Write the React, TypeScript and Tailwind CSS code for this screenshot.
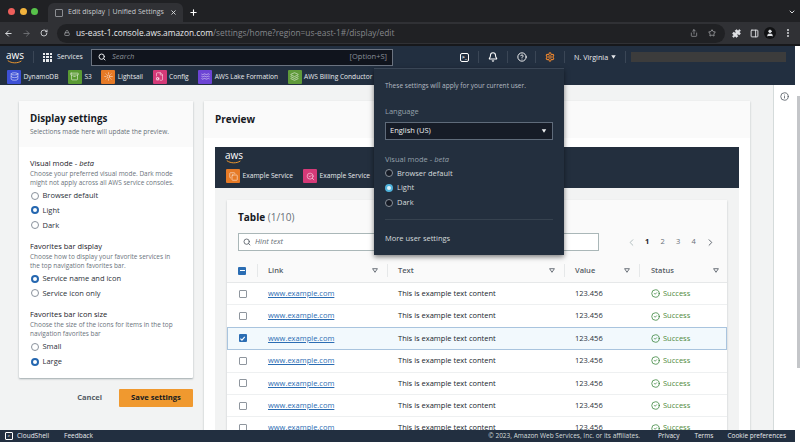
import {
  Archive,
  ArrowLeft,
  ArrowRight,
  Bell,
  ChevronDown,
  ChevronLeft,
  ChevronRight,
  CircleCheck,
  CircleHelp,
  Copy,
  Database,
  FileCog,
  Info,
  Layers,
  Lock,
  MoreVertical,
  PanelRight,
  Plus,
  Puzzle,
  RotateCw,
  Search,
  SearchCheck,
  Settings,
  Share,
  Star,
  Sun,
  User,
  Waves,
  X,
} from "lucide-react";

const favorites = [
  { name: "DynamoDB", color: "bg-[#3d50d6]", icon: Database },
  { name: "S3", color: "bg-[#5a9a33]", icon: Archive },
  { name: "Lightsail", color: "bg-[#e67a26]", icon: Sun },
  { name: "Config", color: "bg-[#d53a78]", icon: FileCog },
  { name: "AWS Lake Formation", color: "bg-[#6c44d4]", icon: Waves },
  { name: "AWS Billing Conductor", color: "bg-[#5f9a3a]", icon: Layers },
];

function Caret({ className }: { className: string }) {
  return (
    <svg viewBox="0 0 10 8" className={className}>
      <path d="M0.5 0.5h9L5 7.5z" fill="currentColor" />
    </svg>
  );
}

function SortIcon() {
  return (
    <svg viewBox="0 0 10 8" className="h-[5px] w-[6px] text-[#545b64]">
      <path d="M1 1h8L5 7z" fill="none" stroke="currentColor" strokeWidth="1.4" />
    </svg>
  );
}

function AwsLogo() {
  return (
    <div className="flex w-[18px] flex-col items-center">
      <span className="text-[10px] leading-[9px] font-medium text-white">aws</span>
      <svg viewBox="0 0 20 5" className="h-[4px] w-[18px]">
        <path d="M1 0.8C6 4.4 13 4.4 18 1.2" fill="none" stroke="#f29a2e" strokeWidth="1.2" />
      </svg>
    </div>
  );
}

function Radio({ checked, dark }: { checked?: boolean; dark?: boolean }) {
  if (checked) {
    return (
      <span
        className={
          dark
            ? "h-[8px] w-[8px] shrink-0 rounded-full border-[2.5px] border-[#4fb3dc] bg-[#dff3fb]"
            : "h-[8px] w-[8px] shrink-0 rounded-full border-[2.5px] border-[#2567b0] bg-white"
        }
      />
    );
  }
  return (
    <span
      className={
        dark
          ? "h-[8px] w-[8px] shrink-0 rounded-full border border-[#8a929c] bg-[#151a24]"
          : "h-[8px] w-[8px] shrink-0 rounded-full border border-[#8a929c] bg-white"
      }
    />
  );
}

function RadioRow({ label, checked }: { label: string; checked?: boolean }) {
  return (
    <div className="flex h-[14.7px] items-center gap-[4px] pl-[0.5px] text-[7.5px] font-medium text-[#2a3038]">
      <Radio checked={checked} />
      <span>{label}</span>
    </div>
  );
}

function SettingsGroup(props: {
  title: React.ReactNode;
  help: string[];
  children: React.ReactNode;
}) {
  return (
    <div className="flex flex-col">
      <div className="text-[7.5px] leading-[10px] font-medium text-[#1b2128]">{props.title}</div>
      <div className="mt-[1px] mb-[1px] text-[6.45px] leading-[9.2px] text-[#6b737c]">
        {props.help.map((line) => (
          <div key={line} className="whitespace-nowrap">
            {line}
          </div>
        ))}
      </div>
      {props.children}
    </div>
  );
}

function Row({ selected, checked }: { selected?: boolean; checked?: boolean }) {
  return (
    <div
      className={
        selected
          ? "-mt-px grid h-[23.4px] shrink-0 grid-cols-[40px_130px_177px_76px_1fr] items-center border border-[#a9c4de] bg-[#f2f9fd] text-[7.5px]"
          : "grid h-[22.4px] shrink-0 grid-cols-[40px_130px_177px_76px_1fr] items-center border-b border-[#eef0f1] px-px text-[7.5px]"
      }
    >
      <div className="pl-[10.5px]">
        {checked ? (
          <span className="flex h-[8px] w-[8px] items-center justify-center rounded-[1px] bg-[#2b6db3]">
            <svg viewBox="0 0 10 10" className="h-[7px] w-[7px]">
              <path d="M2 5.2 4.2 7.4 8.2 2.6" fill="none" stroke="white" strokeWidth="1.6" />
            </svg>
          </span>
        ) : (
          <span className="block h-[8px] w-[8px] rounded-[1px] border border-[#8f969e] bg-white" />
        )}
      </div>
      <div className="text-[#2b6db3] underline">www.example.com</div>
      <div className="font-medium text-[#20262d]">This is example text content</div>
      <div className="font-medium text-[#2a3038]">123.456</div>
      <div className="flex items-center gap-[3px] font-medium text-[#4f8a3c]">
        <CircleCheck className="h-[9px] w-[9px] text-[#2f7d32]" strokeWidth={2} />
        Success
      </div>
    </div>
  );
}

function HeadCell({ label, width }: { label: string; width: string }) {
  return (
    <div className={`flex h-[13px] items-center justify-between border-l border-[#e6e8e9] pr-[9px] pl-[10px] ${width}`}>
      <span className="text-[7.5px] font-semibold text-[#545b64]">{label}</span>
      <SortIcon />
    </div>
  );
}

export default function App() {
  return (
    <div
      className="flex h-[442px] w-[800px] flex-col overflow-hidden bg-white"
      style={{ fontFamily: '"Open Sans", "Noto Sans", sans-serif' }}
    >
      {/* browser tabs */}
      <div className="flex h-[22px] shrink-0 items-end bg-[#202124]">
        <div className="mb-[7px] ml-[8px] flex w-[31px] gap-[4.5px]">
          <span className="h-[7px] w-[7px] rounded-full bg-[#ee5f5b]" />
          <span className="h-[7px] w-[7px] rounded-full bg-[#f2b33d]" />
          <span className="h-[7px] w-[7px] rounded-full bg-[#57c24a]" />
        </div>
        <div className="ml-[9px] flex h-[19px] w-[135px] items-center rounded-t-[6px] bg-[#303135] pr-[6px] pl-[7px]">
          <span className="h-[8px] w-[8px] rounded-[1px] border border-[#8c8e92]" />
          <span className="ml-[5px] text-[7px] whitespace-nowrap text-[#c8cacd]">
            Edit display | Unified Settings
          </span>
          <X className="ml-auto h-[7px] w-[7px] text-[#dfe1e4]" strokeWidth={3} />
        </div>
        <Plus className="mb-[5px] ml-[6px] h-[9px] w-[9px] text-white" strokeWidth={3} />
        <ChevronDown className="mb-[6px] ml-auto mr-[4px] h-[8px] w-[8px] text-[#d8dadd]" strokeWidth={3} />
      </div>
      {/* browser toolbar */}
      <div className="flex h-[24px] shrink-0 items-center border-b-2 border-[#17181b] bg-[#303135]">
        <ArrowLeft className="ml-[4px] h-[9px] w-[9px] text-[#dfe1e4]" strokeWidth={2.5} />
        <ArrowRight className="ml-[9px] h-[9px] w-[9px] text-[#6f7175]" strokeWidth={2.5} />
        <RotateCw className="ml-[9px] h-[8px] w-[8px] text-[#dfe1e4]" strokeWidth={2.5} />
        <div className="ml-[9px] flex h-[19px] w-[668px] items-center rounded-full bg-[#202124] pr-[5px] pl-[7px]">
          <Lock className="h-[6px] w-[6px] text-[#9a9ca0]" strokeWidth={3} />
          <span className="ml-[6px] text-[8.35px] whitespace-nowrap">
            <span className="font-medium text-[#e8eaed]">us-east-1.console.aws.amazon.com</span>
            <span className="text-[#85878b]">/settings/home?region=us-east-1#/display/edit</span>
          </span>
          <Share className="ml-auto h-[8px] w-[8px] text-[#a9abaf]" />
          <Star className="mr-[4px] ml-[10px] h-[8px] w-[8px] text-[#c4c6c9]" />
        </div>
        <Puzzle className="ml-[7px] h-[9px] w-[9px] fill-[#e0e2e5] text-[#e0e2e5]" />
        <PanelRight className="ml-[9px] h-[9px] w-[9px] text-[#e0e2e5]" strokeWidth={2.5} />
        <div className="ml-[5px] flex h-[12px] w-[12px] items-center justify-center rounded-full bg-[#111214]">
          <User className="h-[8px] w-[8px] fill-[#e0e2e5] text-[#e0e2e5]" />
        </div>
        <MoreVertical className="ml-[7px] h-[10px] w-[10px] text-[#d5d7da]" strokeWidth={3} />
      </div>

      <div className="flex min-h-0 flex-1">
        <div className="relative flex w-[795px] shrink-0 flex-col">
          {/* console nav */}
          <div className="flex h-[22px] shrink-0 items-center bg-[#222f40]">
            <div className="ml-[6px]">
              <AwsLogo />
            </div>
            <span className="ml-[9px] h-[12px] w-px bg-[#3a4656]" />
            <div className="ml-[9px] grid h-[9px] w-[9px] grid-cols-3 gap-[1px]">
              {Array.from({ length: 9 }).map((_, i) => (
                <span key={i} className="bg-[#e8eaed]" />
              ))}
            </div>
            <span className="ml-[5px] w-[34px] text-[6.8px] font-medium text-[#e8eaed]">Services</span>
            <div className="flex h-[17px] w-[302px] items-center border border-[#6b7380] bg-[#10141d] pr-[5px] pl-[6px]">
              <Search className="h-[8px] w-[8px] text-[#e8eaed]" strokeWidth={3} />
              <span className="ml-[6px] text-[7.5px] text-[#8a9099] italic">Search</span>
              <span className="ml-auto text-[7.5px] text-[#8a9099]">[Option+S]</span>
            </div>
            <div className="ml-[67px] flex h-[9px] w-[9px] items-center justify-center rounded-[2px] border border-white text-[5px] leading-none font-bold text-white">
              &gt;_
            </div>
            <span className="ml-[9px] h-[12px] w-px bg-[#3a4656]" />
            <Bell className="ml-[9px] h-[10px] w-[10px] text-white" strokeWidth={2.5} />
            <span className="ml-[9px] h-[12px] w-px bg-[#3a4656]" />
            <CircleHelp className="ml-[9px] h-[10px] w-[10px] text-white" strokeWidth={2.2} />
            <span className="ml-[8px] h-[12px] w-px bg-[#3a4656]" />
            <Settings className="ml-[9px] h-[10px] w-[10px] text-[#e8842e]" strokeWidth={2.5} />
            <span className="ml-[9px] h-[12px] w-px bg-[#3a4656]" />
            <span className="ml-[9px] text-[7.2px] font-medium whitespace-nowrap text-[#e8eaed]">N. Virginia</span>
            <Caret className="ml-[3px] h-[4px] w-[5px] text-[#e8eaed]" />
            <span className="ml-[9px] h-[12px] w-px bg-[#3a4656]" />
            <span className="ml-[5px] h-[10px] w-[155px] bg-[#3c3c3c]" />
          </div>
          {/* favorites */}
          <div className="flex h-[17px] shrink-0 items-center gap-[9.5px] bg-[#222f40] pl-[7px]">
            {favorites.map((f) => (
              <div key={f.name} className="flex shrink-0 items-center gap-[2.5px]">
                <span className={`flex h-[14px] w-[14px] shrink-0 items-center justify-center rounded-[1px] ${f.color}`}>
                  <f.icon className="h-[9px] w-[9px] text-white/85" strokeWidth={1.6} />
                </span>
                <span className="text-[6.6px] font-medium whitespace-nowrap text-[#e8eaed]">{f.name}</span>
              </div>
            ))}
          </div>

          {/* page */}
          <div className="flex min-h-0 flex-1 overflow-hidden bg-[#f2f3f3]">
            <div className="flex min-w-0 flex-1 items-start gap-[11px] pt-[16px] pl-[19px]">
              {/* settings column */}
              <div className="flex w-[174px] shrink-0 flex-col">
                <div className="h-[277px] rounded-[1px] bg-white shadow-[0_1px_2px_rgba(0,28,36,0.35)]">
                  <div className="h-[46px] bg-[#fafafa] px-[11px] pt-[11px]">
                    <div className="text-[9.8px] leading-[13px] font-bold text-[#16191f]">Display settings</div>
                    <div className="mt-[2px] text-[6.5px] leading-[9px] text-[#687078]">
                      Selections made here will update the preview.
                    </div>
                  </div>
                  <div className="flex flex-col gap-[8.5px] px-[11px] pt-[11px]">
                    <SettingsGroup
                      title={
                        <>
                          Visual mode - <i>beta</i>
                        </>
                      }
                      help={[
                        "Choose your preferred visual mode. Dark mode",
                        "might not apply across all AWS service consoles.",
                      ]}
                    >
                      <RadioRow label="Browser default" />
                      <RadioRow label="Light" checked />
                      <RadioRow label="Dark" />
                    </SettingsGroup>
                    <SettingsGroup
                      title="Favorites bar display"
                      help={[
                        "Choose how to display your favorite services in",
                        "the top navigation favorites bar.",
                      ]}
                    >
                      <RadioRow label="Service name and icon" checked />
                      <RadioRow label="Service icon only" />
                    </SettingsGroup>
                    <SettingsGroup
                      title="Favorites bar icon size"
                      help={[
                        "Choose the size of the icons for items in the top",
                        "navigation favorites bar",
                      ]}
                    >
                      <RadioRow label="Small" />
                      <RadioRow label="Large" checked />
                    </SettingsGroup>
                  </div>
                </div>
                <div className="mt-[11px] flex items-center justify-end gap-[17px]">
                  <span className="text-[7.5px] font-bold text-[#545b64]">Cancel</span>
                  <div className="flex h-[18px] w-[74px] items-center justify-center rounded-[1px] bg-[#f0992f] text-[7.6px] font-bold text-[#16191f]">
                    Save settings
                  </div>
                </div>
              </div>

              {/* preview */}
              <div className="flex h-[400px] w-[546px] shrink-0 flex-col bg-white shadow-[0_1px_2px_rgba(0,28,36,0.25)]">
                <div className="flex h-[37px] shrink-0 items-center bg-[#fafafa] pl-[11px] text-[10px] font-bold text-[#16191f]">
                  Preview
                </div>
                <div className="mt-[9px] ml-[11px] flex w-[524px] flex-1 flex-col bg-[#f2f3f3]">
                  <div className="h-[41px] shrink-0 bg-[#232f3e] pt-[4px] pl-[10px]">
                    <AwsLogo />
                    <div className="mt-[5px] flex gap-[10px] pl-[1px]">
                      <div className="flex items-center gap-[2.5px]">
                        <span className="flex h-[14px] w-[14px] items-center justify-center rounded-[1px] bg-[#e67a26]">
                          <Copy className="h-[9px] w-[9px] text-white/85" strokeWidth={1.6} />
                        </span>
                        <span className="text-[6.7px] font-medium whitespace-nowrap text-[#e8eaed]">Example Service</span>
                      </div>
                      <div className="flex items-center gap-[2.5px]">
                        <span className="flex h-[14px] w-[14px] items-center justify-center rounded-[1px] bg-[#d53a78]">
                          <SearchCheck className="h-[9px] w-[9px] text-white/85" strokeWidth={1.6} />
                        </span>
                        <span className="text-[6.7px] font-medium whitespace-nowrap text-[#e8eaed]">Example Service</span>
                      </div>
                    </div>
                  </div>
                  {/* table card */}
                  <div className="mt-[12px] ml-[12px] flex min-h-0 w-[500px] flex-1 flex-col bg-white shadow-[0_1px_2px_rgba(0,28,36,0.2)]">
                    <div className="h-[60px] shrink-0 bg-[#fafafa] px-[11px] pt-[10px]">
                      <div className="text-[10px] leading-[14px] font-bold text-[#16191f]">
                        Table <span className="font-normal text-[#687078]">(1/10)</span>
                      </div>
                      <div className="mt-[9px] flex items-center">
                        <div className="flex h-[18px] w-[364px] items-center border border-[#aab7b8] bg-white pl-[4px]">
                          <Search className="h-[8px] w-[8px] text-[#545b64]" strokeWidth={2.5} />
                          <span className="ml-[4px] text-[7.5px] text-[#687078] italic">Hint text</span>
                        </div>
                        <ChevronLeft className="ml-[27px] h-[11px] w-[11px] text-[#aab7b8]" strokeWidth={2} />
                        <div className="ml-[8px] flex gap-[10px] text-[7.5px] font-medium text-[#687078]">
                          <span className="w-[5.5px] font-bold text-[#16191f]">1</span>
                          <span className="w-[5.5px]">2</span>
                          <span className="w-[5.5px]">3</span>
                          <span className="w-[5.5px]">4</span>
                        </div>
                        <ChevronRight className="ml-[8px] h-[11px] w-[11px] text-[#545b64]" strokeWidth={2} />
                      </div>
                    </div>
                    <div className="flex h-[23px] shrink-0 items-center border-b border-[#e6e8e9] bg-[#fafafa] pb-[1px] text-[7.5px]">
                      <div className="flex w-[30px] justify-center">
                        <span className="flex h-[8px] w-[8px] items-center justify-center rounded-[1px] bg-[#2b6db3]">
                          <span className="h-px w-[5px] bg-white" />
                        </span>
                      </div>
                      <HeadCell label="Link" width="w-[130px]" />
                      <HeadCell label="Text" width="w-[177px]" />
                      <HeadCell label="Value" width="w-[75px]" />
                      <div className="flex h-[13px] flex-1 items-center justify-between border-l border-[#e6e8e9] pr-[8px] pl-[11px]">
                        <span className="text-[7.5px] font-semibold text-[#545b64]">Status</span>
                        <SortIcon />
                      </div>
                    </div>
                    <div className="flex min-h-0 flex-1 flex-col overflow-hidden">
                      <Row />
                      <Row />
                      <Row selected checked />
                      <Row />
                      <Row />
                      <Row />
                      <Row />
                    </div>
                  </div>
                </div>
              </div>
            </div>
            {/* tools rail */}
            <div className="flex w-[22px] shrink-0 justify-center border-l border-[#d5dbdb] bg-white pt-[7px]">
              <Info className="h-[9px] w-[9px] text-[#545b64]" strokeWidth={2.2} />
            </div>
          </div>

          {/* footer */}
          <div className="flex h-[12px] shrink-0 items-center bg-[#222f40] text-[6.5px] font-medium text-[#e8eaed]">
            <span className="ml-[5px] flex h-[8px] w-[8px] items-center justify-center rounded-[1px] border border-white text-[4px] leading-none font-bold">
              &gt;
            </span>
            <span className="ml-[4px]">CloudShell</span>
            <span className="ml-[15px]">Feedback</span>
            <span className="ml-auto text-[#d5dbdb]">© 2023, Amazon Web Services, Inc. or its affiliates.</span>
            <span className="ml-[18px]">Privacy</span>
            <span className="ml-[15px]">Terms</span>
            <span className="mr-[9px] ml-[14px]">Cookie preferences</span>
          </div>

          {/* settings menu */}
          <div className="absolute top-[22px] left-[374px] flex h-[187px] w-[190px] flex-col border-t border-[#3a4656] bg-[#232f3e] px-[11px] pt-[12px] shadow-[0_2px_5px_rgba(0,0,0,0.5)]">
            <div className="text-[6.55px] leading-[9px] text-[#b4bac2]">These settings will apply for your current user.</div>
            <div className="mt-[16px] text-[7.5px] leading-[10px] text-[#95a0aa]">Language</div>
            <div className="mt-[6px] flex h-[18px] w-[168px] items-center justify-between border border-[#5f6b7a] bg-[#161c27] pr-[5px] pl-[4px] text-[7.5px] font-medium text-[#eef0f2]">
              English (US)
              <Caret className="h-[4px] w-[6px] text-[#eef0f2]" />
            </div>
            <div className="mt-[14px] text-[7.5px] leading-[10px] text-[#95a0aa]">
              Visual mode - <i>beta</i>
            </div>
            <div className="mt-[2px] flex flex-col text-[7.5px] font-medium text-[#d5dbdb]">
              {["Browser default", "Light", "Dark"].map((label) => (
                <div key={label} className="flex h-[14.7px] items-center gap-[4px]">
                  <Radio dark checked={label === "Light"} />
                  {label}
                </div>
              ))}
            </div>
            <div className="mt-[9px] h-px w-[168px] bg-[#36424f]" />
            <div className="mt-[13px] text-[7.5px] font-medium text-[#d5dbdb]">More user settings</div>
          </div>
        </div>
        {/* page scrollbar */}
        <div className="flex w-[5px] shrink-0 justify-end bg-white">
          <div className="mt-[50px] h-[272px] w-[3px] bg-[#c4c6c9]" />
        </div>
      </div>
    </div>
  );
}
